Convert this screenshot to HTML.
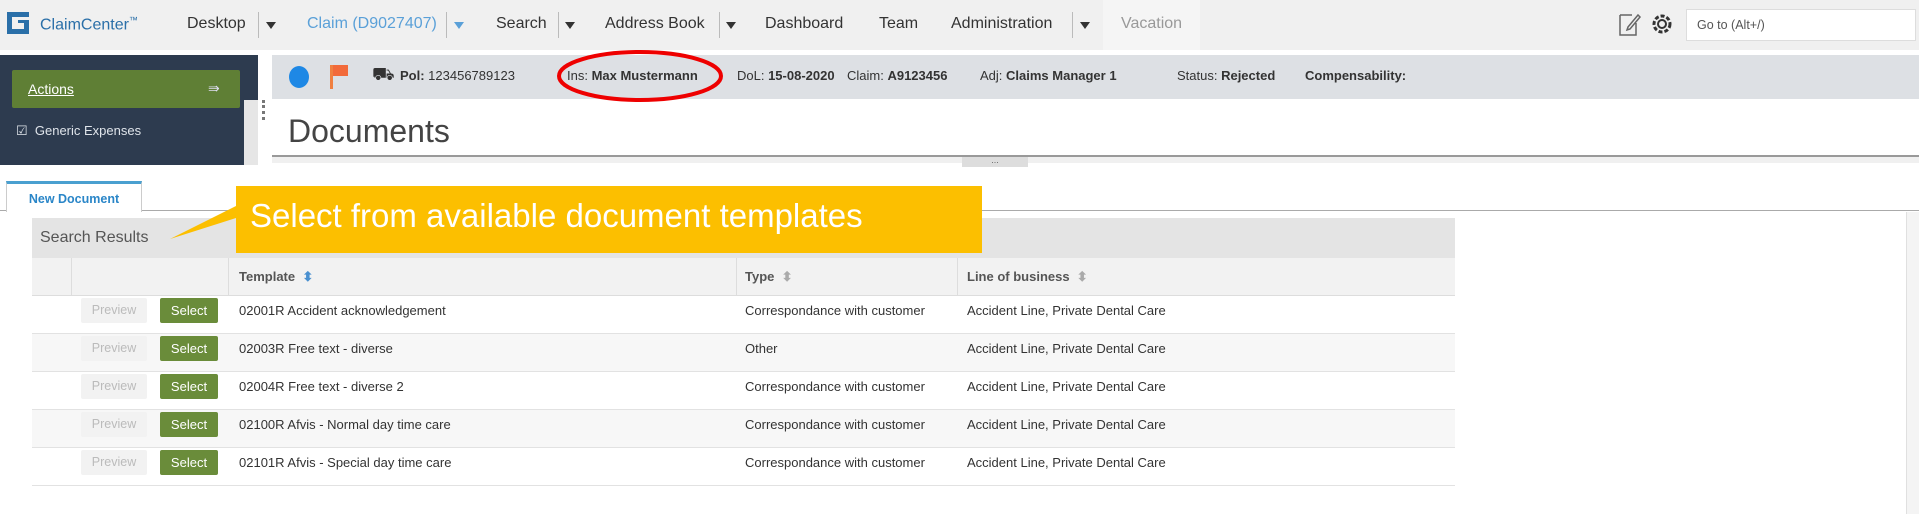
<!DOCTYPE html>
<html><head><meta charset="utf-8"><style>
*{margin:0;padding:0;box-sizing:border-box}
body{width:1919px;height:514px;overflow:hidden;background:#fff;font-family:"Liberation Sans",sans-serif;position:relative;color:#333}
.a{position:absolute;white-space:nowrap}
.nav{left:0;top:0;width:1919px;height:50px;background:#f0f0f0}
.ni{top:15px;font-size:16px;color:#333}
.sep{top:12px;width:1px;height:26px;background:#bbb}
.tri{top:22px;width:0;height:0;border-left:5px solid transparent;border-right:5px solid transparent;border-top:7px solid #333}
.hb{left:272px;top:55px;width:1647px;height:44px;background:#dde0e4}
.hi{top:68px;font-size:13px;color:#333}
.hi b{font-weight:bold}
.row{left:32px;width:1423px;height:38px;border-bottom:1px solid #e2e2e2}
.pv{width:66px;height:25px;background:#f2f2f2;color:#bbb;font-size:12.5px;text-align:center;line-height:25px;border-radius:2px}
.sl{width:58px;height:25px;background:#6a8c3a;color:#fff;font-size:13px;text-align:center;line-height:25px;border-radius:2px}
.tx{font-size:13px;color:#333}
</style></head><body>
<div class="a nav"></div>
<svg class="a" style="left:7px;top:12px" width="22" height="22" viewBox="0 0 22 22"><path d="M0 0H22V5H5V17H17V11H11V8H22V22H0Z" fill="#2a6fa8"/></svg>
<div class="a ni" style="left:40px;color:#2a6fa8">ClaimCenter<sup style="font-size:9px">™</sup></div>
<div class="a ni" style="left:187px">Desktop</div><div class="a sep" style="left:258px"></div><div class="a tri" style="left:266px"></div>
<div class="a ni" style="left:307px;color:#5aa0d8">Claim (D9027407)</div><div class="a sep" style="left:446px"></div><div class="a tri" style="left:454px;border-top-color:#5aa0d8"></div>
<div class="a ni" style="left:496px">Search</div><div class="a sep" style="left:558px"></div><div class="a tri" style="left:565px"></div>
<div class="a ni" style="left:605px">Address Book</div><div class="a sep" style="left:719px"></div><div class="a tri" style="left:726px"></div>
<div class="a ni" style="left:765px">Dashboard</div>
<div class="a ni" style="left:879px">Team</div>
<div class="a ni" style="left:951px">Administration</div><div class="a sep" style="left:1072px"></div><div class="a tri" style="left:1080px"></div>
<div class="a" style="left:1103px;top:0;width:97px;height:50px;background:#f5f5f5"></div>
<div class="a ni" style="left:1121px;color:#999">Vacation</div>
<svg class="a" style="left:1618px;top:11px" width="24" height="26" viewBox="0 0 24 26"><path d="M2 4H14M2 4V24H18V12M10 16L20 4L22 6L12 18L9 19Z" fill="none" stroke="#666" stroke-width="1.5"/></svg>
<svg class="a" style="left:1650px;top:11px" width="24" height="26" viewBox="0 0 24 26"><circle cx="12" cy="13" r="8" fill="none" stroke="#333" stroke-width="3" stroke-dasharray="4 2"/><circle cx="12" cy="13" r="4" fill="none" stroke="#333" stroke-width="2"/></svg>
<div class="a" style="left:1686px;top:9px;width:230px;height:32px;background:#fff;border:1px solid #ddd;font-size:12.5px;color:#555;padding:8px 10px">Go to (Alt+/)</div>
<div class="a" style="left:0;top:55px;width:258px;height:110px;background:#2d3b4f"></div>
<div class="a" style="left:12px;top:70px;width:228px;height:38px;background:#5f7f35;border-radius:2px"></div>
<div class="a" style="left:28px;top:81px;font-size:14px;color:#fff;text-decoration:underline">Actions</div>
<div class="a" style="left:208px;top:80px;font-size:14px;color:#dde">⇛</div>
<div class="a" style="left:16px;top:123px;font-size:13px;color:#dfe4ea">☑&nbsp; Generic Expenses</div>
<div class="a" style="left:244px;top:100px;width:14px;height:65px;background:#e6e6e6"></div>
<div class="a" style="left:262px;top:100px;width:4px;height:20px;border-left:3px dotted #777"></div>
<div class="a hb"></div>
<div class="a" style="left:289px;top:66px;width:20px;height:22px;border-radius:50%;background:#1e88e5"></div>
<div class="a" style="left:330px;top:65px;width:3px;height:24px;background:#f08040"></div>
<div class="a" style="left:333px;top:65px;width:15px;height:11px;background:#f26a3a"></div>
<div class="a hi" style="left:372px;top:64px;font-size:18px">⛟</div>
<div class="a hi" style="left:400px"><b>Pol:</b> 123456789123</div>
<div class="a hi" style="left:567px">Ins: <b>Max Mustermann</b></div>
<div class="a hi" style="left:737px">DoL: <b>15-08-2020</b></div>
<div class="a hi" style="left:847px">Claim: <b>A9123456</b></div>
<div class="a hi" style="left:980px">Adj: <b>Claims Manager 1</b></div>
<div class="a hi" style="left:1177px">Status: <b>Rejected</b></div>
<div class="a hi" style="left:1305px"><b>Compensability:</b></div>
<svg class="a" style="left:555px;top:48px" width="170" height="56"><ellipse cx="85" cy="28" rx="81" ry="24" fill="none" stroke="#e00" stroke-width="4"/></svg>
<div class="a" style="left:288px;top:113px;font-size:32px;color:#444">Documents</div>
<div class="a" style="left:272px;top:155px;width:1647px;height:8px;background:#f0f0f0;border-top:2px solid #999"></div>
<div class="a" style="left:962px;top:157px;width:66px;height:10px;background:#ddd;font-size:9px;text-align:center;line-height:6px;color:#666">...</div>
<div class="a" style="left:0;top:210px;width:1919px;height:1px;background:#aaa"></div>
<div class="a" style="left:6px;top:181px;width:136px;height:31px;background:#fff;border:1px solid #ccc;border-top:3px solid #4aa0d0;border-bottom:none;font-size:12.5px;font-weight:bold;color:#2a86c8;text-align:center;padding-top:8px">New Document</div>
<div class="a" style="left:32px;top:218px;width:1423px;height:40px;background:#e4e4e4"></div>
<div class="a" style="left:40px;top:229px;font-size:16px;color:#555">Search Results</div>
<div class="a" style="left:32px;top:258px;width:1423px;height:38px;background:#f2f2f2;border-bottom:1px solid #ddd"></div>
<div class="a" style="left:71px;top:258px;width:1px;height:38px;background:#ddd"></div>
<div class="a" style="left:228px;top:258px;width:1px;height:38px;background:#ddd"></div>
<div class="a" style="left:736px;top:258px;width:1px;height:38px;background:#ddd"></div>
<div class="a" style="left:957px;top:258px;width:1px;height:38px;background:#ddd"></div>
<div class="a tx" style="left:239px;top:269px;font-weight:bold;color:#555">Template&nbsp; <span style="color:#4a90d0">⬍</span></div>
<div class="a tx" style="left:745px;top:269px;font-weight:bold;color:#555">Type&nbsp; <span style="color:#aaa">⬍</span></div>
<div class="a tx" style="left:967px;top:269px;font-weight:bold;color:#555">Line of business&nbsp; <span style="color:#aaa">⬍</span></div>

<div class="a row" style="top:296px"></div>
<div class="a pv" style="left:81px;top:298px">Preview</div><div class="a sl" style="left:160px;top:298px">Select</div>
<div class="a tx" style="left:239px;top:303px">02001R Accident acknowledgement</div><div class="a tx" style="left:745px;top:303px">Correspondance with customer</div><div class="a tx" style="left:967px;top:303px">Accident Line, Private Dental Care</div>

<div class="a row" style="top:334px;background:#f7f7f7"></div>
<div class="a pv" style="left:81px;top:336px">Preview</div><div class="a sl" style="left:160px;top:336px">Select</div>
<div class="a tx" style="left:239px;top:341px">02003R Free text - diverse</div><div class="a tx" style="left:745px;top:341px">Other</div><div class="a tx" style="left:967px;top:341px">Accident Line, Private Dental Care</div>

<div class="a row" style="top:372px"></div>
<div class="a pv" style="left:81px;top:374px">Preview</div><div class="a sl" style="left:160px;top:374px">Select</div>
<div class="a tx" style="left:239px;top:379px">02004R Free text - diverse 2</div><div class="a tx" style="left:745px;top:379px">Correspondance with customer</div><div class="a tx" style="left:967px;top:379px">Accident Line, Private Dental Care</div>

<div class="a row" style="top:410px;background:#f7f7f7"></div>
<div class="a pv" style="left:81px;top:412px">Preview</div><div class="a sl" style="left:160px;top:412px">Select</div>
<div class="a tx" style="left:239px;top:417px">02100R Afvis - Normal day time care</div><div class="a tx" style="left:745px;top:417px">Correspondance with customer</div><div class="a tx" style="left:967px;top:417px">Accident Line, Private Dental Care</div>

<div class="a row" style="top:448px"></div>
<div class="a pv" style="left:81px;top:450px">Preview</div><div class="a sl" style="left:160px;top:450px">Select</div>
<div class="a tx" style="left:239px;top:455px">02101R Afvis - Special day time care</div><div class="a tx" style="left:745px;top:455px">Correspondance with customer</div><div class="a tx" style="left:967px;top:455px">Accident Line, Private Dental Care</div>

<div class="a" style="left:1906px;top:212px;width:13px;height:302px;background:#f4f4f4;border-left:1px solid #e0e0e0"></div>
<svg class="a" style="left:170px;top:184px" width="814" height="70"><polygon points="66,2 812,2 812,69 66,69 66,34 0,55 66,22" fill="#fcbf00"/></svg>
<div class="a" style="left:250px;top:197px;font-size:33px;color:#fff;font-weight:300">Select from available document templates</div>
</body></html>
